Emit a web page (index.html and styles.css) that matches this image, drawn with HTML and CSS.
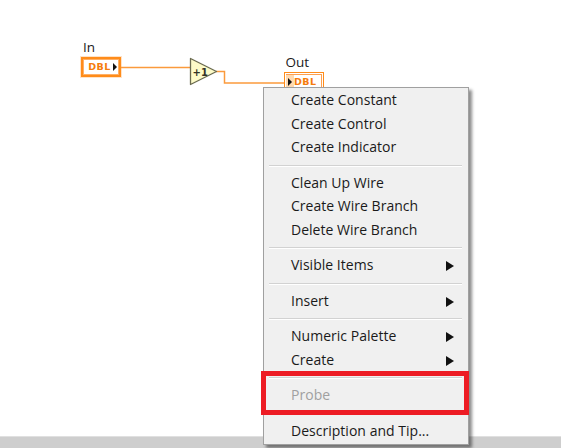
FILE: index.html
```html
<!DOCTYPE html>
<html>
<head>
<meta charset="utf-8">
<title>Wire context menu</title>
<link rel="stylesheet" href="styles.css">
</head>
<body>
<main class="canvas">
  <span class="label label-in">In</span>
  <div class="terminal terminal-in"><span class="dbl">DBL</span><span class="arrow-right"></span></div>
  <svg class="wires" width="561" height="448" viewBox="0 0 561 448" aria-hidden="true">
    <path class="wire" d="M121 67.5H190"/>
    <path class="wire" d="M216 71.500H224.500V83H285"/>
    <path class="node" d="M190.500 58.500L216.500 71.500L190.500 84.500Z"/>
    <text class="node-text" x="192.500" y="75.500">+1</text>
  </svg>
  <span class="label label-out">Out</span>
  <div class="terminal terminal-out"><span class="arrow-box"><span class="arrow-right"></span></span><span class="dbl">DBL</span></div>

  <div class="status-bar"></div>

  <nav class="menu">
    <div class="item">Create Constant</div>
    <div class="item">Create Control</div>
    <div class="item">Create Indicator</div>
    <div class="sep"></div>
    <div class="item">Clean Up Wire</div>
    <div class="item">Create Wire Branch</div>
    <div class="item">Delete Wire Branch</div>
    <div class="sep"></div>
    <div class="item">Visible Items<span class="chev"></span></div>
    <div class="sep"></div>
    <div class="item">Insert<span class="chev"></span></div>
    <div class="sep"></div>
    <div class="item">Numeric Palette<span class="chev"></span></div>
    <div class="item">Create<span class="chev"></span></div>
    <div class="sep"></div>
    <div class="item disabled">Probe</div>
    <div class="sep"></div>
    <div class="item">Description and Tip...</div>
  </nav>
  <div class="highlight"></div>
</main>
</body>
</html>
```
FILE: styles.css
```css
* { box-sizing: border-box; }
html, body { margin: 0; padding: 0; background: #fff; }
.canvas {
  position: relative;
  width: 561px;
  height: 448px;
  overflow: hidden;
  font-family: "Open Sans", "Noto Sans", sans-serif;
  color: #1a1a1a;
  background: #fff;
}
.wires { position: absolute; left: 0; top: 0; }
.wire { fill: none; stroke: #fb9a3c; stroke-width: 1.500; }
.node { fill: #fdfbc8; stroke: #6b6b50; stroke-width: 1.300; stroke-linejoin: round; }
.node-text {
  font-family: "DejaVu Sans", sans-serif;
  font-weight: 700;
  font-size: 10px;
  fill: #333326;
}
.label { position: absolute; font-size: 13.500px; line-height: 16px; }
.label-in { left: 83px; top: 39px; }
.label-out { left: 285.500px; top: 54px; }
.terminal {
  position: absolute;
  display: flex;
  align-items: center;
  background: #fff;
  border: 2px solid #ff8c1a;
}
.terminal-in {
  left: 81px; top: 57px; width: 40px; height: 20px;
  padding-left: 3px;
  padding-right: 2px;
  box-shadow: inset 0 0 0 1px #ffb066, 0 0 0 1px #ffe3c8;
}
.terminal-out {
  left: 284px; top: 72px; width: 40px; height: 22px;
  padding: 2px 3px 2px 1px;
  border-width: 1.500px;
  box-shadow: inset 0 0 0 1px #fff, inset 0 0 0 2px #ffa050;
  align-items: flex-start;
}
.dbl {
  font-family: "DejaVu Sans", sans-serif;
  font-weight: 700;
  font-size: 9.500px;
  letter-spacing: 0.4px;
  line-height: 14px;
  color: #f57c0c;
}
.terminal-in .dbl { flex: 1; text-align: center; }
.arrow-right {
  width: 0; height: 0;
  border-left: 4px solid #111;
  border-top: 4px solid transparent;
  border-bottom: 4px solid transparent;
}
.arrow-box {
  display: flex;
  align-items: center;
  padding-left: 2px;
  width: 8px; height: 13px;
  background: #ffd9b0;
}
.status-bar {
  position: absolute;
  left: 0; right: 0; top: 436px; bottom: 0;
  background: #cecece;
  border-top: 1px solid #e0e0e0;
}
.menu {
  position: absolute;
  left: 263px; top: 87px;
  width: 206px;
  padding: 1px 2px;
  display: flex;
  flex-direction: column;
  background: #f0f0f0;
  border: 1px solid #a0a0a0;
  box-shadow: 3px 3px 3px rgba(0, 0, 0, 0.45);
  font-size: 14px;
  letter-spacing: 0.02px;
}
.item {
  position: relative;
  height: 23.500px;
  line-height: 22.500px;
  padding-left: 25px;
  white-space: nowrap;
}
.disabled { color: #a0a0a0; }
.sep {
  height: 2px;
  margin: 5px 4px 5px 3px;
  background: #d2d2d2;
  border-bottom: 1px solid #fff;
}
.chev {
  position: absolute;
  right: 12px; top: 7px;
  width: 0; height: 0;
  border-left: 8px solid #111;
  border-top: 5px solid transparent;
  border-bottom: 5px solid transparent;
}
.highlight {
  position: absolute;
  left: 261px; top: 371px;
  width: 208px; height: 44px;
  border: 5px solid #ed1c24;
}
```
